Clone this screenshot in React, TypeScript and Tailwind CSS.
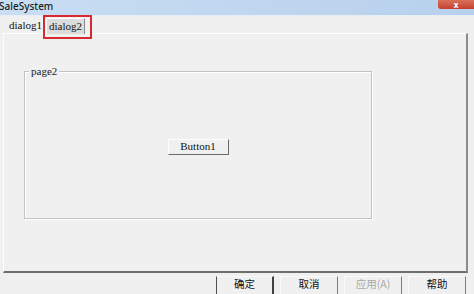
import React from "react";

const serif = "font-['Liberation_Serif',serif]";
const cjk = "font-['Noto_Sans_CJK_SC',sans-serif]";

const DialogButton: React.FC<{label: string; primary?: boolean; disabled?: boolean}> = ({
  label,
  primary,
  disabled,
}) => (
  <div
    className={`flex h-[22px] w-[58px] items-start justify-center border-t border-l text-[10.5px] leading-[14px] ${cjk} ${
      primary
        ? "border-[#f8f8f8] border-r-2 border-b-2 border-r-[#404040] border-b-[#404040] border-l-[#505050]"
        : "border-[#fafafa] border-r border-b border-r-[#7a7a7a] border-b-[#7a7a7a]"
    } ${disabled ? "text-[#a8a8a8]" : "text-[#111]"}`}
  >
    {label}
  </div>
);

const App: React.FC = () => {
  return (
    <div className="relative h-[294px] w-[474px] overflow-hidden bg-[#f0f0f0]">
      {/* title bar */}
      <div className="relative h-[15px] bg-gradient-to-r from-[#c9def3] to-[#b7d0ec]">
        <span className="absolute left-[-1px] top-[0px] font-['Noto_Sans',sans-serif] text-[10px] font-medium leading-[13px] text-[#1c1c1c]">
          SaleSystem
        </span>
        <div className="absolute right-0 top-0 flex h-[9px] w-[36px] items-end justify-center rounded-bl-[3px] bg-gradient-to-b from-[#d8705a] to-[#c4412e]">
          <span className="text-[8px] font-bold leading-[8px] text-white">x</span>
        </div>
      </div>
      <div className="h-px bg-[#e9eef4]" />

      {/* tab control */}
      <div className="ml-[3px] w-[465px]">
        <div className="flex h-[17px] items-end">
          <div className={`ml-[2px] h-[14px] px-[4px] text-[11px] leading-[13px] text-[#111] ${serif}`}>
            dialog1
          </div>
          <div className="relative">
            <div
              className={`mb-[-1px] h-[16px] border border-b-0 border-[#fff] border-r-[#8a8a8a] bg-[#dcdcdc] px-[2px] text-[11px] leading-[14px] text-[#111] ${serif}`}
            >
              dialog2
            </div>
            <div className="absolute left-[-3px] top-[-3px] h-[24px] w-[49px] border-2 border-[#d8292f]" />
          </div>
        </div>

        {/* pane */}
        <div className="h-[240px] border-t border-l border-[#fdfdfd] border-r-2 border-b-2 border-r-[#8c8c8c] border-b-[#6e6e6e] pl-[20px] pt-[37px]">
          <div className="relative h-[148px] w-[348px] border border-[#c3c3c3] shadow-[inset_1px_1px_0_#fff,1px_1px_0_#fff]">
            <span
              className={`absolute left-[4px] top-[-8px] bg-[#f0f0f0] px-[2px] text-[11px] leading-[14px] text-[#222] ${serif}`}
            >
              page2
            </span>
            <div className="flex h-full items-center justify-center pt-[3px]">
              <div
                className={`flex h-[16px] w-[61px] items-center justify-center border border-[#fdfdfd] border-r-[#6a6a6a] border-b-[#6a6a6a] text-[11px] text-[#111] ${serif}`}
              >
                Button1
              </div>
            </div>
          </div>
        </div>
      </div>

      {/* dialog buttons */}
      <div className="flex gap-[6px] pl-[216px] pt-[3px]">
        <DialogButton label="确定" primary />
        <DialogButton label="取消" />
        <DialogButton label="应用(A)" disabled />
        <DialogButton label="帮助" />
      </div>
    </div>
  );
};

export default App;
